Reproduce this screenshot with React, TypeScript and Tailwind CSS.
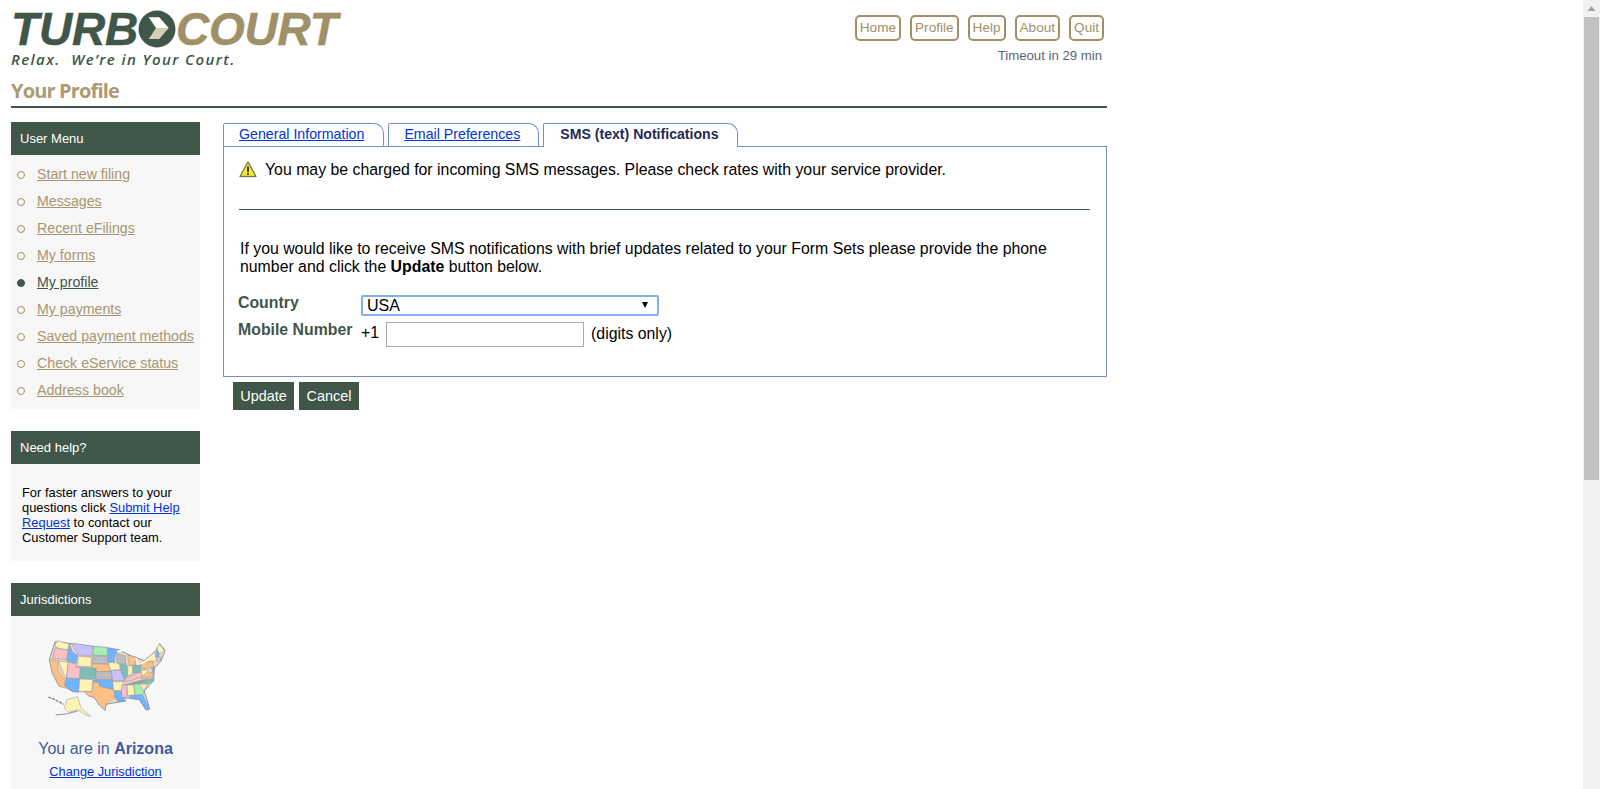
const links = [
  "Start new filing",
  "Messages",
  "Recent eFilings",
  "My forms",
  "My profile",
  "My payments",
  "Saved payment methods",
  "Check eService status",
  "Address book",
];

const navButtons = ["Home", "Profile", "Help", "About", "Quit"];

// [points, fill] traced roughly off the reference map
const states: [string, string][] = [
  ["78,35 115,45 112,62 85,60 72,50", "#fff3b0"],
  ["65,88 72,56 112,64 106,92", "#f9c0c8"],
  ["55,92 82,95 80,125 110,165 105,178 85,172 65,135", "#fcc082"],
  ["82,96 112,100 105,150", "#fff3b0"],
  ["115,45 125,70 140,78 135,104 107,95", "#70b4ff"],
  ["120,42 185,52 182,82 142,78", "#c8c0fb"],
  ["142,82 182,85 180,113 140,112", "#fff3b0"],
  ["112,100 135,105 135,115 148,115 146,148 106,148", "#f9c0c8"],
  ["106,147 145,150 143,190 125,187 100,170", "#70b4ff"],
  ["148,115 195,118 195,150 146,148", "#7fbdb5"],
  ["146,150 185,152 183,188 143,188", "#fff3b0"],
  ["188,52 228,55 230,80 186,78", "#a8eeb0"],
  ["186,80 230,82 232,105 184,103", "#bdbdbd"],
  ["184,104 232,106 240,128 196,128 196,118 182,116", "#fcc082"],
  ["195,128 240,128 244,152 195,152", "#bdbdbd"],
  ["187,153 245,153 247,182 222,178 205,172 205,160 187,160", "#70b4ff"],
  ["187,160 205,160 205,172 248,182 252,205 225,225 222,243 205,228 190,205 172,200 160,186 184,188", "#fcc082"],
  ["230,55 265,65 250,80 250,100 232,100", "#70b4ff"],
  ["232,100 265,102 268,122 238,124", "#fff3b0"],
  ["240,124 270,124 282,155 245,155", "#c8c0fb"],
  ["245,158 278,158 272,185 248,185", "#fff3b0"],
  ["250,185 272,187 272,200 285,215 260,218 252,205", "#70b4ff"],
  ["250,72 282,80 285,105 262,105", "#bdbdbd"],
  ["268,105 288,108 290,140 280,150 270,125", "#7fbdb5"],
  ["290,78 315,85 312,110 295,108", "#fcc082"],
  ["290,110 305,110 305,135 290,140", "#fff3b0"],
  ["305,108 330,108 328,130 307,132", "#7fbdb5"],
  ["282,150 305,137 328,130 336,142 300,155 282,158", "#f9c0c8"],
  ["278,168 345,150 352,146 338,158 320,165 278,168", "#a0a0a0"],
  ["272,168 288,168 288,205 272,205", "#f9c0c8"],
  ["288,168 308,168 312,198 290,200", "#fff3b0"],
  ["308,166 325,165 340,185 335,198 313,198", "#a8eeb0"],
  ["295,200 335,198 356,240 345,242 325,212 296,208", "#70b4ff"],
  ["325,165 350,165 338,185", "#fff3b0"],
  ["325,163 365,146 368,155 350,165", "#7fbdb5"],
  ["328,148 348,128 365,132 366,142", "#fcc082"],
  ["330,125 345,122 350,128 335,142", "#fff3b0"],
  ["332,100 365,97 368,115 332,120", "#fcc082"],
  ["340,95 370,70 378,95 366,97", "#fff3b0"],
  ["362,118 370,112 368,135", "#70b4ff"],
  ["376,66 384,66 384,82 376,90", "#70b4ff"],
  ["376,84 390,84 388,96 378,96", "#f9c0c8"],
  ["385,45 400,65 385,75 378,55", "#fff3b0"],
  ["108,212 140,203 150,238 180,262 165,258 140,243 112,250 100,238", "#fff3b0"],
];

function UsaMap() {
  return (
    <svg width="150" height="100" viewBox="0 0 450 300" className="blur-[0.7px]">
      {/* land underlay so the gaps between states do not show white */}
      <polygon
        points="72,38 186,52 265,62 290,76 340,95 372,68 386,44 402,64 390,96 370,118 368,155 340,186 356,240 345,243 325,212 296,208 272,206 285,216 258,220 225,226 222,244 205,228 190,205 172,200 160,188 125,188 100,172 85,172 65,135 55,92"
        fill="#e9d9b8"
        stroke="#8d93ad"
        strokeWidth="3"
        strokeLinejoin="round"
      />
      <g stroke="#8d93ad" strokeWidth="1.6" strokeLinejoin="round">
        {states.map(([points, fill]) => (
          <polygon key={points} points={points} fill={fill} />
        ))}
      </g>
      <path d="M258 68 L292 60 L318 72 M315 88 L322 108 M330 104 L352 92" fill="none" stroke="#ffffff" strokeWidth="5" />
      <path d="M52 204 L72 212 L98 226" fill="none" stroke="#8a7f78" strokeWidth="4" strokeDasharray="9 3" />
      <path d="M74 258 L110 254 L140 246" fill="none" stroke="#8d93ad" strokeWidth="3" />
    </svg>
  );
}

function Logo() {
  return (
    <div className="flex flex-col">
      <div className="flex h-[36px] items-center font-['Liberation_Sans',sans-serif] text-[46px] font-bold italic leading-none tracking-[-0.2px] [-webkit-text-stroke:0.5px]">
        <span className="text-[#3f5649]">TURB</span>
        <svg width="38" height="38" viewBox="0 0 38 38" className="shrink-0">
          <circle cx="19" cy="19" r="18.5" fill="#3f5649" />
          <polygon points="10.7,7.3 21.3,7.3 30.7,18 18,18" fill="#ffffff" />
          <polygon points="18,18 30.7,18 21.3,29 10.7,29" fill="#d3cdb6" />
        </svg>
        <span className="text-[#a09068]">COURT</span>
      </div>
      <div className="mt-[4px] whitespace-pre font-['Open_Sans',sans-serif] text-[15px] font-semibold italic leading-[17px] tracking-[1.4px] text-[#3f5649]">
        Relax.  We’re in Your Court.
      </div>
    </div>
  );
}

function Header() {
  return (
    <div className="flex h-[69px] justify-between pl-0 pr-[3px]">
      <div className="pt-[11px]">
        <Logo />
      </div>
      <div className="flex flex-col items-end pt-[15px]">
        <div className="flex gap-[9px]">
          {navButtons.map((label) => (
            <a
              key={label}
              className="flex h-[26px] items-center rounded-[5px] border-2 border-[#a09068] px-[3px] text-[13.6px] text-[#a09068]"
            >
              {label}
            </a>
          ))}
        </div>
        <div className="mt-[7px] pr-[2px] text-[13.2px] leading-[16px] text-[#5a6672]">Timeout in 29 min</div>
      </div>
    </div>
  );
}

function SideHeader({ title }: { title: string }) {
  return (
    <div className="flex h-[33px] items-center bg-[#3f5649] pl-[9px] text-[13px] text-white">{title}</div>
  );
}

function Sidebar() {
  return (
    <aside className="flex w-[189px] shrink-0 flex-col gap-[22px]">
      <div>
        <SideHeader title="User Menu" />
        <ul className="flex flex-col gap-[9px] bg-[#f7f7f7] pt-[11px] pb-[9px]">
          {links.map((label) => {
            const active = label === "My profile";
            return (
              <li key={label} className="flex h-[18px] items-center text-[14.2px]">
                <span
                  className={
                    active
                      ? "ml-[6px] mr-[12px] h-[8px] w-[8px] rounded-full border-[1.5px] border-[#3f5649] bg-[#3f5649]"
                      : "ml-[6px] mr-[12px] h-[8px] w-[8px] rounded-full border-[1.5px] border-[#a09068]"
                  }
                />
                <a className={active ? "text-[#3f5649] underline" : "text-[#a8966f] underline"}>{label}</a>
              </li>
            );
          })}
        </ul>
      </div>
      <div>
        <SideHeader title="Need help?" />
        <div className="bg-[#f7f7f7] pt-[21px] pr-[14px] pb-[16px] pl-[11px] text-[12.9px] leading-[15px] text-black">
          For faster answers to your questions click{" "}
          <a className="text-[#0033dd] underline">Submit Help Request</a> to contact our Customer Support team.
        </div>
      </div>
      <div>
        <SideHeader title="Jurisdictions" />
        <div className="flex flex-col items-center bg-[#f7f7f7] pt-[13px] pb-[10px]">
          <UsaMap />
          <div className="mt-[10px] text-[16px] leading-[20px] text-[#3f5a9e]">
            You are in <b>Arizona</b>
          </div>
          <a className="mt-[5px] text-[12.8px] leading-[16px] text-[#0033dd] underline">Change Jurisdiction</a>
        </div>
      </div>
    </aside>
  );
}

function Tab({ label, active, wide }: { label: string; active?: boolean; wide?: boolean }) {
  if (active) {
    return (
      <div className="z-10 -mb-px flex h-[24px] items-center rounded-tr-[10px] rounded-tl-[2px] border border-b-0 border-[#6e93c4] bg-white pb-px pl-[16px] pr-[19px] text-[14.1px] font-bold text-[#1f2a52]">
        {label}
      </div>
    );
  }
  return (
    <div
      className={
        wide
          ? "flex h-[23px] items-center rounded-tr-[10px] rounded-tl-[2px] border border-b-0 border-[#6e93c4] bg-white pl-[15px] pr-[19px] text-[14.2px] text-[#0033dd] underline"
          : "flex h-[23px] items-center rounded-tr-[10px] rounded-tl-[2px] border border-b-0 border-[#6e93c4] bg-white pl-[15px] pr-[18px] text-[14.2px] text-[#0033dd] underline"
      }
    >
      {label}
    </div>
  );
}

function WarningIcon() {
  return (
    <svg width="18" height="17" viewBox="0 0 18 17" className="shrink-0">
      <path d="M9 1 L17 15.5 L1 15.5 Z" fill="#f7f21a" stroke="#77775a" strokeWidth="1.4" strokeLinejoin="round" />
      <rect x="8.1" y="5.5" width="1.8" height="5.5" fill="#222" />
      <rect x="8.1" y="12" width="1.8" height="1.8" fill="#222" />
    </svg>
  );
}

function SmsPanel() {
  return (
    <div className="h-[231px] border border-[#6e93c4] pt-[13px] pl-[15px] pr-[16px] text-[15.85px] text-black">
      <div className="flex h-[19px] items-center gap-[8px]">
        <WarningIcon />
        <span>You may be charged for incoming SMS messages. Please check rates with your service provider.</span>
      </div>
      <hr className="mt-[30px] border-t border-[#3f5649]" />
      <p className="mt-[30px] pl-px leading-[18px]">
        If you would like to receive SMS notifications with brief updates related to your Form Sets please provide the
        phone number and click the <b>Update</b> button below.
      </p>
      <div className="-ml-px mt-[18px] grid grid-cols-[123px_auto] gap-y-[6px]">
        <label className="font-bold leading-[18px] text-[#3f5649]">Country</label>
        <div className="relative h-[21px] w-[298px]">
          <select className="h-full w-full appearance-none rounded-[2px] border-2 border-[#85aef0] bg-white pl-[4px] text-[16px] leading-[17px] text-black outline-none">
            <option>USA</option>
          </select>
          <span className="pointer-events-none absolute right-[11px] top-[8px] h-0 w-0 border-x-[3.5px] border-t-[6px] border-x-transparent border-t-black" />
        </div>
        <label className="font-bold leading-[18px] text-[#3f5649]">Mobile Number</label>
        <div className="flex items-center">
          <span className="mr-[7px] pb-[3px]">+1</span>
          <input className="h-[25px] w-[198px] border border-[#a9a9a9] bg-white" />
          <span className="ml-[7px] pb-[2px]">(digits only)</span>
        </div>
      </div>
    </div>
  );
}

export default function App() {
  return (
    <div className="flex h-screen overflow-hidden bg-white font-['Liberation_Sans',Arial,sans-serif]">
      <main className="min-w-0 flex-1 pl-[11px]">
        <div className="w-[1096px]">
          <Header />
          <h1 className="mt-[9px] font-['Open_Sans',sans-serif] text-[20px] font-bold leading-[26px] tracking-[-0.85px] text-[#ac9a72]">
            Your Profile
          </h1>
          <div className="mt-[2px] h-[2px] bg-[#3f5649]" />
          <div className="mt-[14px] flex gap-[23px]">
            <Sidebar />
            <div className="min-w-0 flex-1 pt-px">
              <div className="flex gap-[4px]">
                <Tab label="General Information" wide />
                <Tab label="Email Preferences" />
                <Tab label="SMS (text) Notifications" active />
              </div>
              <SmsPanel />
              <div className="mt-[5px] flex gap-[5px] pl-[10px]">
                <button className="h-[28px] w-[61px] bg-[#3f5649] pt-px text-[14.4px] text-white">Update</button>
                <button className="h-[28px] w-[60px] bg-[#3f5649] pt-px text-[14.4px] text-white">Cancel</button>
              </div>
            </div>
          </div>
        </div>
      </main>
      {/* drawn scrollbar so the track shows at a fixed width */}
      <div className="flex w-[17px] shrink-0 flex-col items-center bg-[#f1f1f1]">
        <svg width="17" height="17" viewBox="0 0 17 17" className="shrink-0">
          <polygon points="8.5,6 12.5,11 4.5,11" fill="#a3a3a3" />
        </svg>
        <div className="h-[463px] w-[15px] bg-[#c1c1c1]" />
      </div>
    </div>
  );
}
